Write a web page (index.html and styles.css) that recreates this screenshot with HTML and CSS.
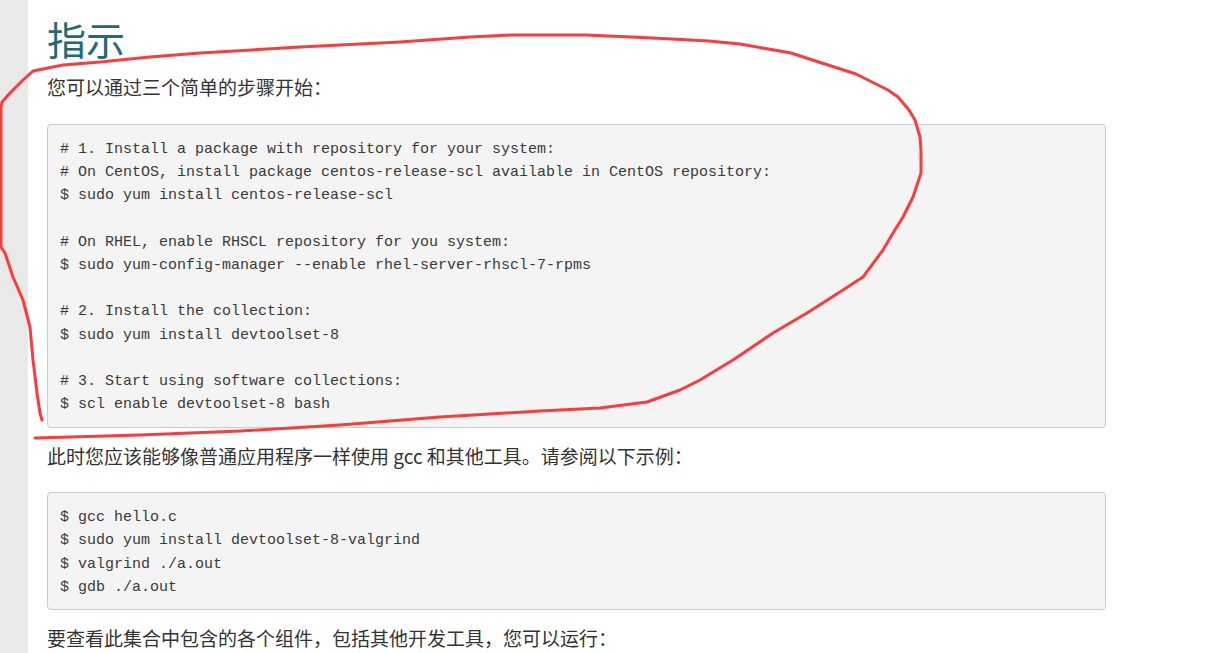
FILE: index.html
```html
<!DOCTYPE html>
<html lang="zh-CN">
<head>
<meta charset="utf-8">
<title>指示</title>
<link rel="stylesheet" href="styles.css">
</head>
<body>
<div class="page">
  <aside class="rail"></aside>
  <main class="content">
    <h1 class="title">指示</h1>
    <p class="text">您可以通过三个简单的步骤开始：</p>
    <pre class="code"># 1. Install a package with repository for your system:
# On CentOS, install package centos-release-scl available in CentOS repository:
$ sudo yum install centos-release-scl

# On RHEL, enable RHSCL repository for you system:
$ sudo yum-config-manager --enable rhel-server-rhscl-7-rpms

# 2. Install the collection:
$ sudo yum install devtoolset-8

# 3. Start using software collections:
$ scl enable devtoolset-8 bash</pre>
    <p class="text">此时您应该能够像普通应用程序一样使用 gcc 和其他工具。请参阅以下示例：</p>
    <pre class="code">$ gcc hello.c
$ sudo yum install devtoolset-8-valgrind
$ valgrind ./a.out
$ gdb ./a.out</pre>
    <p class="text">要查看此集合中包含的各个组件，包括其他开发工具，您可以运行：</p>
  </main>
  <svg class="scribble" width="1211" height="653" viewBox="0 0 1211 653" aria-hidden="true">
    <path d="M35 438 L140 435 L240 431 L340 425 L440 417 L540 411 L600 408 L647 402 L680 390 L700 380 L733 360 L773 333 L807 313 L843 290 L863 277 L883 250 L893 233 L903 217 L913 197 L921 173 L921 150 L920 137 L915 120 L909 110 L898 97 L888 90 L856 74 L828 65 L791 53 L740 44 L709 41 L653 38 L586 35 L512 35 L470 37 L400 42 L300 47 L200 53 L150 57 L100 62 L63 65 L33 71 L23 80 L10 93 L2 102 L1 107 L1 247 L5 253 L13 277 L23 300 L30 327 L33 360 L37 393 L40 413 L42 420"/>
  </svg>
</div>
</body>
</html>
```
FILE: styles.css
```css
html, body {
  margin: 0;
  padding: 0;
  background: #ffffff;
}

.page {
  position: relative;
  display: flex;
  min-height: 100vh;
  height: 653px;
  overflow: hidden;
}

.rail {
  flex: none;
  width: 28px;
  background: #e9e9e9;
}

.content {
  flex: none;
  width: 1059px;
  padding: 15px 0 0 19px;
  font-family: "Noto Sans CJK SC", "Noto Sans", sans-serif;
  color: #333333;
}

.title {
  margin: 0;
  font-size: 39px;
  line-height: 46px;
  font-weight: 400;
  color: #216b76;
}

.text {
  margin: 13px 0 0;
  font-size: 19px;
  line-height: 26px;
}

.code {
  margin: 23px 0 0;
  padding: 13px 12px 10px 12px;
  background: #f4f4f4;
  border: 1px solid #cccccc;
  border-radius: 4px;
  font-family: "Liberation Mono", "DejaVu Sans Mono", monospace;
  font-size: 15px;
  line-height: 23.27px;
  color: #3a3a3a;
  white-space: pre;
}

.text + .code {
  margin-top: 23.5px;
}

.code + .text {
  margin-top: 15px;
}

.scribble {
  position: absolute;
  left: 0;
  top: 0;
  pointer-events: none;
  fill: none;
  stroke: #fa3c3c;
  stroke-width: 3;
  stroke-linejoin: round;
  stroke-linecap: round;
}
```
